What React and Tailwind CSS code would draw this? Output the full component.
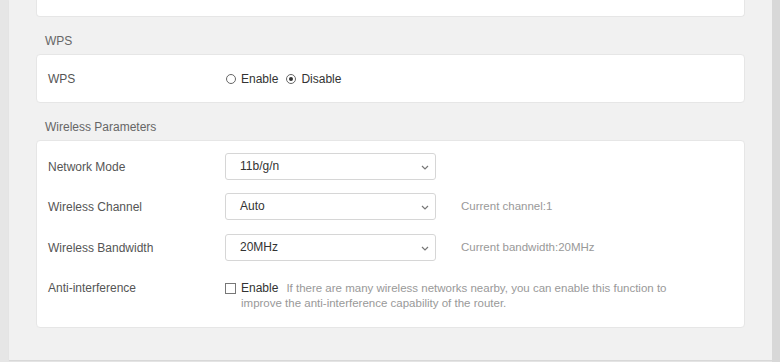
import React from "react";

function Chevron() {
  return (
    <svg width="8" height="5" viewBox="0 0 8 5" className="absolute right-[6px] top-[11px]">
      <path d="M1 1 L4 4 L7 1" fill="none" stroke="#777" strokeWidth="1.2" />
    </svg>
  );
}

function Select({ value }) {
  return (
    <div className="relative h-[27px] w-[211px] rounded-[3px] border border-[#d6d6d6] bg-white pl-[14px] text-[12px] leading-[25px] text-[#333]">
      {value}
      <Chevron />
    </div>
  );
}

function Radio({ checked }) {
  return (
    <span className="flex h-[10px] w-[10px] items-center justify-center rounded-full border border-[#666] bg-white">
      {checked && <span className="h-[4px] w-[4px] rounded-full bg-[#333]" />}
    </span>
  );
}

export default function App() {
  return (
    <div
      className="flex h-[362px] w-[780px] bg-[#e6e6e6] overflow-hidden"
      style={{ fontFamily: '"Liberation Sans", Arial, sans-serif' }}
    >
      <div className="w-[9px] shrink-0" />
      <div className="flex h-[360px] flex-1 flex-col bg-[#f1f1f1] px-[27px] shadow-[0_1px_1px_rgba(0,0,0,0.06)]">
        <div className="h-[17px] rounded-b-[4px] border border-t-0 border-[#e6e6e6] bg-white" />

        <div className="h-[37px] pl-[9px] pt-[16px] text-[12px] leading-[16px] text-[#666]">WPS</div>
        <div className="flex h-[49px] items-center rounded-[4px] border border-[#e6e6e6] bg-white pl-[11px] text-[12px] text-[#555]">
          <div className="w-[178px]">WPS</div>
          <div className="flex items-center text-[#333]">
            <Radio />
            <span className="ml-[5px]">Enable</span>
            <span className="ml-[8px]"><Radio checked /></span>
            <span className="ml-[5px]">Disable</span>
          </div>
        </div>

        <div className="h-[37px] pl-[9px] pt-[16px] text-[12px] leading-[16px] text-[#666]">Wireless Parameters</div>
        <div className="flex flex-col rounded-[4px] border border-[#e6e6e6] bg-white pb-[16px] pl-[11px] pt-[12px] text-[12px] text-[#555]">
          <div className="flex h-[27px] items-center">
            <div className="w-[177px]">Network Mode</div>
            <Select value="11b/g/n" />
          </div>
          <div className="mt-[13px] flex h-[27px] items-center">
            <div className="w-[177px]">Wireless Channel</div>
            <Select value="Auto" />
            <div className="ml-[25px] text-[11.5px] text-[#999]">Current channel:1</div>
          </div>
          <div className="mt-[14px] flex h-[27px] items-center">
            <div className="w-[177px]">Wireless Bandwidth</div>
            <Select value="20MHz" />
            <div className="ml-[25px] text-[11.5px] text-[#999]">Current bandwidth:20MHz</div>
          </div>
          <div className="mt-[20px] flex items-start leading-[15px]">
            <div className="w-[177px]">Anti-interference</div>
            <div className="flex w-[470px] items-start text-[#999]">
              <span className="mt-[2px] h-[11px] w-[11px] shrink-0 border border-[#777] bg-white" />
              <div className="ml-[5px] w-[440px]">
                <span className="text-[#333]">Enable</span>
                <span className="ml-[8px] text-[11.5px]">If there are many wireless networks nearby, you can enable this function to improve the anti-interference capability of the router.</span>
              </div>
            </div>
          </div>
        </div>
      </div>
      <div className="w-[8px] shrink-0 bg-[#d8d8d8]" />
    </div>
  );
}
